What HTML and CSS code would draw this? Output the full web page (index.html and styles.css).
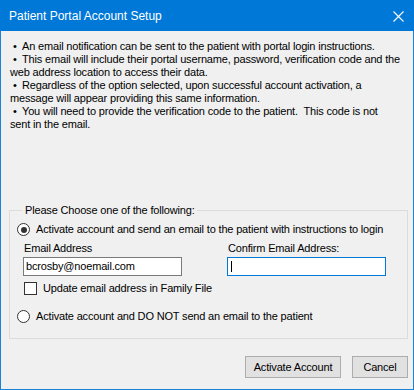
FILE: index.html
```
<!DOCTYPE html>
<html>
<head>
<meta charset="utf-8">
<link rel="stylesheet" href="styles.css">
</head>
<body>
<div class="window">
  <div class="titlebar">
    <span class="title">Patient Portal Account Setup</span>
    <svg class="close" width="11" height="11" viewBox="0 0 11 11"><path d="M0.5 0.5 L10.5 10.5 M10.5 0.5 L0.5 10.5" stroke="#fff" stroke-width="1.1" fill="none"/></svg>
  </div>
  <div class="info">
    <div class="line"><span class="bul">•</span>An email notification can be sent to the patient with portal login instructions.</div>
    <div class="line"><span class="bul">•</span>This email will include their portal username, password, verification code and the</div>
    <div class="line">web address location to access their data.</div>
    <div class="line"><span class="bul">•</span>Regardless of the option selected, upon successful account activation, a</div>
    <div class="line">message will appear providing this same information.</div>
    <div class="line"><span class="bul">•</span>You will need to provide the verification code to the patient.&nbsp; This code is not</div>
    <div class="line">sent in the email.</div>
  </div>
  <fieldset class="group">
    <legend class="legend">Please Choose one of the following:</legend>
    <div class="opt"><span class="radio checked"></span><span>Activate account and send an email to the patient with instructions to login</span></div>
    <div class="fields">
      <div class="field">
        <div class="flabel">Email Address</div>
        <div class="input">bcrosby@noemail.com</div>
      </div>
      <div class="field field2">
        <div class="flabel">Confirm Email Address:</div>
        <div class="input focus"><span class="caret"></span></div>
      </div>
    </div>
    <div class="check"><span class="box"></span><span>Update email address in Family File</span></div>
    <div class="opt opt2"><span class="radio"></span><span>Activate account and DO NOT send an email to the patient</span></div>
  </fieldset>
  <div class="buttons">
    <div class="btn btn-activate">Activate Account</div>
    <div class="btn btn-cancel">Cancel</div>
  </div>
</div>
</body>
</html>
```
FILE: styles.css
```
html, body {
  margin: 0;
  padding: 0;
  background: #f0f0f0;
}
.window {
  width: 414px;
  height: 390px;
  box-sizing: border-box;
  border: 1px solid #1883d7;
  border-top: none;
  background: #f0f0f0;
  font-family: "Liberation Sans", Arial, sans-serif;
  font-size: 11px;
  letter-spacing: -0.17px;
  color: #000;
  display: flex;
  flex-direction: column;
}
.titlebar {
  height: 31px;
  margin: 0 -1px;
  background: #0078d7;
  display: flex;
  align-items: center;
  justify-content: space-between;
  padding: 0 10px 0 9px;
  flex-shrink: 0;
}
.title {
  color: #fff;
  font-size: 12px;
  line-height: 16px;
  letter-spacing: 0;
}
.close {
  display: block;
  margin-top: 1px;
}
.info {
  margin: 1px 2px 0 2px;
  padding: 7px 5px 5px 6px;
  border: 1px solid transparent;
  height: 160px;
  box-sizing: border-box;
}
.line {
  line-height: 13px;
  white-space: nowrap;
}
.bul {
  display: inline-block;
  width: 9px;
  padding-left: 3px;
}
.group {
  margin: 12px 5px 0 8px;
  padding: 0 0 0 7px;
  border: 1px solid #dcdcdc;
  height: 135px;
  box-sizing: border-box;
  min-width: 0;
}
.legend {
  padding: 0 2px;
  margin-left: 6px;
  line-height: 13px;
}
.opt {
  display: flex;
  align-items: center;
  gap: 6px;
  height: 13px;
  line-height: 13px;
  margin-top: 6px;
}
.opt2 {
  margin-top: 15px;
}
.radio {
  width: 11px;
  height: 11px;
  border: 1px solid #333;
  border-radius: 50%;
  background: #fff;
  position: relative;
  flex-shrink: 0;
}
.radio.checked::after {
  content: "";
  position: absolute;
  left: 2.5px;
  top: 2.5px;
  width: 6px;
  height: 6px;
  border-radius: 50%;
  background: #333;
}
.fields {
  display: flex;
  margin-top: 6px;
  padding-left: 6px;
}
.field {
  width: 159px;
}
.field2 {
  margin-left: 45px;
}
.flabel {
  line-height: 13px;
  padding-left: 1px;
}
.input {
  margin-top: 2px;
  height: 19px;
  box-sizing: border-box;
  border: 1px solid #7a7a7a;
  background: #fff;
  padding-left: 2px;
  line-height: 17px;
  display: flex;
  align-items: center;
}
.input.focus {
  border-color: #0078d7;
}
.caret {
  display: block;
  width: 1px;
  height: 11px;
  background: #000;
  margin-left: 1px;
}
.check {
  display: flex;
  align-items: center;
  gap: 6px;
  margin-top: 6px;
  padding-left: 7px;
  line-height: 13px;
}
.box {
  width: 11px;
  height: 11px;
  border: 1px solid #333;
  background: #fff;
  flex-shrink: 0;
}
.buttons {
  display: flex;
  justify-content: flex-end;
  gap: 11px;
  margin: 17px 5px 0 0;
}
.btn {
  height: 22px;
  box-sizing: border-box;
  border: 1px solid #adadad;
  background: #e1e1e1;
  display: flex;
  align-items: center;
  justify-content: center;
  line-height: 13px;
}
.btn-activate {
  width: 96px;
}
.btn-cancel {
  width: 56px;
}
```
